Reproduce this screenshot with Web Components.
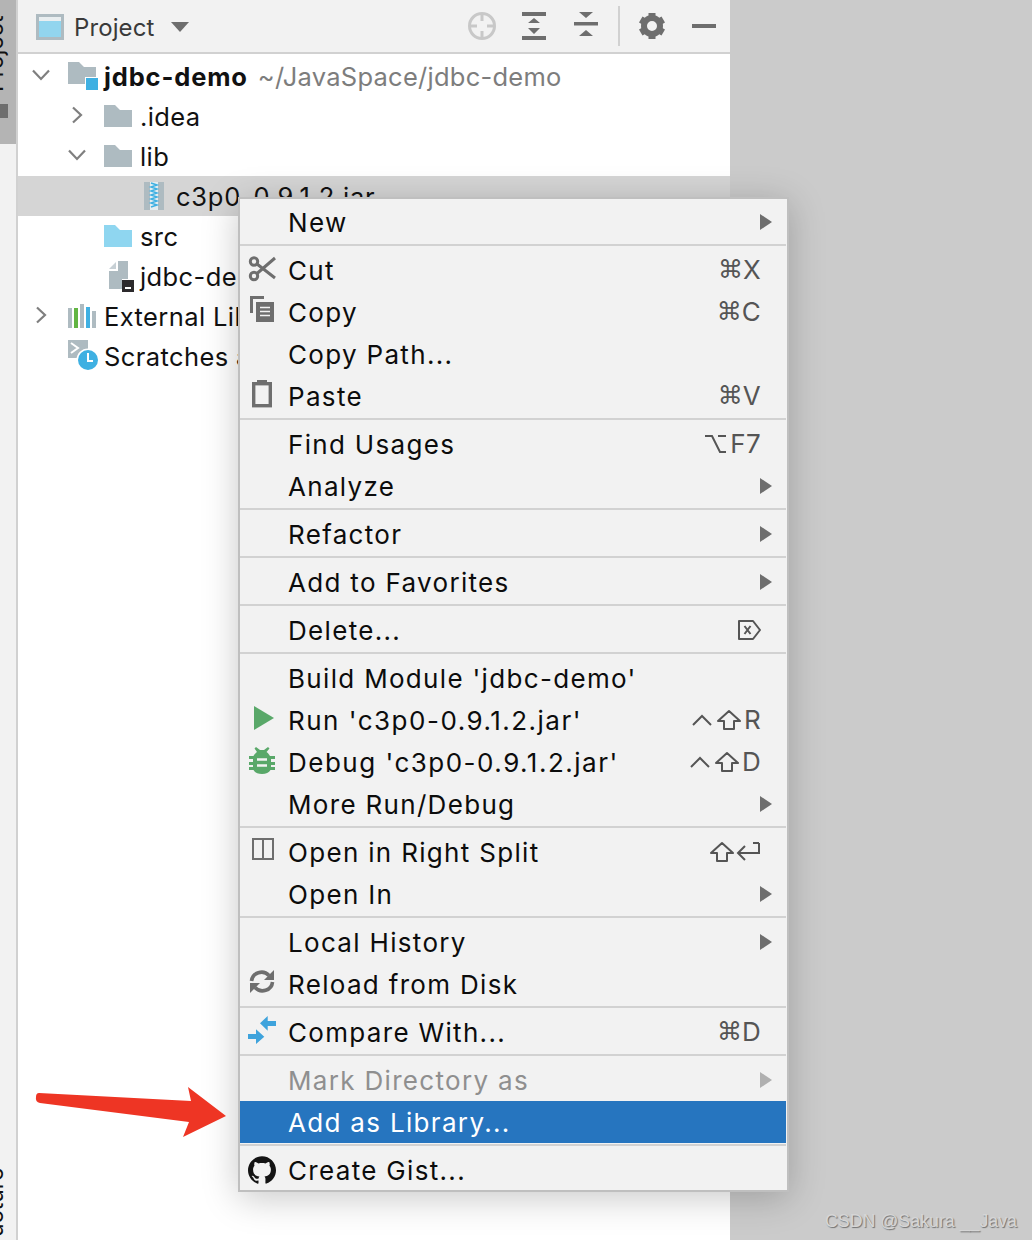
<!DOCTYPE html>
<html lang="en"><head><meta charset="utf-8"><title>Project context menu</title>
<style>
html,body{margin:0;padding:0;background:#cbcbcb}
body{font-family:Inter,"Liberation Sans",sans-serif;width:1032px;height:1240px;overflow:hidden}
</style></head><body>
<ij-app>
  <ij-strip slot="strip"></ij-strip>
  <ij-panel slot="panel">
    <ij-toolbar></ij-toolbar>
    <ij-row depth="0" chev="down" icon="module"><b style="letter-spacing:.85px">jdbc-demo</b><span style="color:#7d7d7d;margin-left:10px;letter-spacing:.25px">~/JavaSpace/jdbc-demo</span></ij-row>
    <ij-row depth="1" chev="right" icon="folder">.idea</ij-row>
    <ij-row depth="1" chev="down" icon="folder">lib</ij-row>
    <ij-row depth="2" icon="jar" selected><span style="letter-spacing:.75px">c3p0-0.9.1.2.jar</span></ij-row>
    <ij-row depth="1" icon="srcfolder">src</ij-row>
    <ij-row depth="1" icon="iml">jdbc-demo.iml</ij-row>
    <ij-row depth="0" chev="right" icon="libs">External Libraries</ij-row>
    <ij-row depth="0" icon="scratch">Scratches and Consoles</ij-row>
  </ij-panel>
  <ij-menu slot="overlay">
    <ij-item arrow>New</ij-item>
    <ij-sep></ij-sep>
    <ij-item icon="cut" keys="cmd X">Cut</ij-item>
    <ij-item icon="copy" keys="cmd C">Copy</ij-item>
    <ij-item>Copy Path...</ij-item>
    <ij-item icon="paste" keys="cmd V">Paste</ij-item>
    <ij-sep></ij-sep>
    <ij-item keys="opt F7">Find Usages</ij-item>
    <ij-item arrow>Analyze</ij-item>
    <ij-sep></ij-sep>
    <ij-item arrow>Refactor</ij-item>
    <ij-sep></ij-sep>
    <ij-item arrow>Add to Favorites</ij-item>
    <ij-sep></ij-sep>
    <ij-item keys="del">Delete...</ij-item>
    <ij-sep></ij-sep>
    <ij-item>Build Module 'jdbc-demo'</ij-item>
    <ij-item icon="run" keys="ctrl shift R"><span style="letter-spacing:1.5px">Run 'c3p0-0.9.1.2.jar'</span></ij-item>
    <ij-item icon="debug" keys="ctrl shift D"><span style="letter-spacing:1.5px">Debug 'c3p0-0.9.1.2.jar'</span></ij-item>
    <ij-item arrow>More Run/Debug</ij-item>
    <ij-sep></ij-sep>
    <ij-item icon="split" keys="shift ret">Open in Right Split</ij-item>
    <ij-item arrow>Open In</ij-item>
    <ij-sep></ij-sep>
    <ij-item arrow>Local History</ij-item>
    <ij-item icon="reload">Reload from Disk</ij-item>
    <ij-sep></ij-sep>
    <ij-item icon="compare" keys="cmd D">Compare With...</ij-item>
    <ij-sep></ij-sep>
    <ij-item arrow disabled>Mark Directory as</ij-item>
    <ij-item active>Add as Library...</ij-item>
    <ij-sep></ij-sep>
    <ij-item icon="github">Create Gist...</ij-item>
  </ij-menu>
  <ij-arrow slot="overlay"></ij-arrow>
  <ij-mark slot="overlay">CSDN @Sakura __Java</ij-mark>
</ij-app>
<script>
const G='#6e6e6e', F='#aebbc1', B='#3fb0e2', GR='#59a869', K='#555';
const FOLDER='M0 0H11L16 5H28V22H0Z';
const ICONS={
 panel:[28,26,`<rect x="1.5" y="1.5" width="25" height="23" fill="#92d5ee" stroke="${F}" stroke-width="3"/><rect x="3" y="3" width="22" height="4" fill="#e9eef0"/>`],
 module:[32,28,`<path d="${FOLDER}" fill="${F}"/><rect x="17" y="15" width="14" height="14" fill="#fff"/><rect x="18" y="16" width="12" height="12" fill="${B}"/>`],
 folder:[28,22,`<path d="${FOLDER}" fill="${F}"/>`],
 srcfolder:[28,22,`<path d="${FOLDER}" fill="#8fd6f0"/>`],
 jar:[24,28,`<g transform="translate(4 0)"><rect width="20" height="28" fill="${F}"/><rect x="6" width="8" height="28" fill="#e4edf0"/><path d="M7 1l6 2-6 2 6 2-6 2 6 2-6 2 6 2-6 2 6 2-6 2 6 2-6 2" fill="none" stroke="#3fb0e2" stroke-width="1.500"/></g>`],
 iml:[30,30,`<g transform="translate(4 0)"><path d="M1 8L8 1V8Z" fill="#c7d0d5"/><path d="M10 0H20V20H14V28H1V10H10Z" fill="${F}"/><rect x="14" y="18" width="13" height="13" fill="#fff"/><rect x="14" y="19" width="12" height="12" fill="#2c2a2c"/><rect x="17" y="26" width="6" height="2" fill="#fff"/></g>`],
 libs:[28,24,`<rect y="4" width="4" height="20" fill="${F}"/><rect x="6" y="4" width="4" height="20" fill="#62b543"/><rect x="12" width="4" height="24" fill="${F}"/><rect x="18" y="3" width="4" height="21" fill="${B}"/><rect x="24" y="7" width="4" height="17" fill="${F}"/>`],
 scratch:[30,32,`<rect width="20" height="18" fill="${F}"/><path d="M3 3l7 5-7 5" fill="none" stroke="#fff" stroke-width="2"/><circle cx="20" cy="20" r="11.5" fill="#fff"/><circle cx="20" cy="20" r="10" fill="${B}"/><path d="M20 13v8h5" fill="none" stroke="#fff" stroke-width="2"/>`],
 cut:[28,28,`<g fill="none" stroke="${G}" stroke-width="3"><circle cx="6" cy="5.500" r="3.700"/><circle cx="6" cy="20" r="3.700"/><path d="M9 8L27 22M9 17.500L27 2"/></g>`],
 copy:[28,28,`<path d="M2-2H16V1H5V15H2Z" fill="${G}"/><rect x="8" y="4" width="18" height="20" fill="${G}"/><path d="M12 9.500H22M12 13.500H22M12 17.500H22" stroke="#f2f2f2" stroke-width="1.600"/>`],
 paste:[28,28,`<rect x="5.700" y="1.700" width="16.600" height="22" fill="none" stroke="${G}" stroke-width="3.400"/><rect x="9" y="-2" width="10" height="5" fill="${G}"/>`],
 run:[28,28,`<path d="M6 0L26 12L6 24Z" fill="${GR}"/>`],
 debug:[28,28,`<path d="M8-1l4 3h4l4-3 1.500 1.500-3 3.500c2 1.500 3 3 3.500 4H27v3h-4v3h4v3h-4v2h4v3h-4.500c-1.500 2.500-4.500 4-8.500 4s-7-1.500-8.500-4H1v-3h4v-2H1v-3h4v-3H1V8h4.500C6 7 7 5.500 9 4L6.500.5Z" fill="${GR}"/><path d="M9 11.500H19M9 17.500H19" stroke="#f2f2f2" stroke-width="2.500"/>`],
 split:[28,28,`<rect x="5" y="1" width="20" height="20" fill="none" stroke="${G}" stroke-width="2"/><path d="M15 1V21" stroke="${G}" stroke-width="2"/>`],
 reload:[28,28,`<g fill="none" stroke="${G}" stroke-width="3.600"><path d="M3.500 11A10 9.500 0 0 1 21 5.500"/><path d="M24.500 12A10 9.500 0 0 1 7 17.500"/></g><path d="M26 0V10H16Z" fill="${G}"/><path d="M2 23V13H12Z" fill="${G}"/>`],
 compare:[28,28,`<path transform="translate(0 -2)" d="M12 7.300L19.700 0V5H28V10H19.700V14.700Z M16.300 20.700L8 13.300V18H0V23H8V28Z" fill="#3ea3dc"/>`],
 github:[28,28,`<path transform="scale(1.167)" fill="#141414" d="M12 .297c-6.630 0-12 5.373-12 12 0 5.303 3.438 9.800 8.205 11.385.600.113.820-.258.820-.577 0-.285-.010-1.040-.015-2.040-3.338.724-4.042-1.610-4.042-1.610C4.422 18.070 3.633 17.700 3.633 17.700c-1.087-.744.084-.729.084-.729 1.205.084 1.838 1.236 1.838 1.236 1.070 1.835 2.809 1.305 3.495.998.108-.776.417-1.305.760-1.605-2.665-.300-5.466-1.332-5.466-5.930 0-1.310.465-2.380 1.235-3.220-.135-.303-.540-1.523.105-3.176 0 0 1.005-.322 3.300 1.230.960-.267 1.980-.399 3-.405 1.020.006 2.040.138 3 .405 2.280-1.552 3.285-1.230 3.285-1.230.645 1.653.240 2.873.120 3.176.765.840 1.230 1.910 1.230 3.220 0 4.610-2.805 5.625-5.475 5.920.420.360.810 1.096.810 2.220 0 1.606-.015 2.896-.030 3.286 0 .315.210.690.825.570C20.565 22.092 24 17.592 24 12.297c0-6.627-5.373-12-12-12"/>`],
 del:[24,20,`<g fill="none" stroke="${K}" stroke-width="2" stroke-linejoin="round"><path d="M2 1H16L23 10L16 19H2Z"/><path d="M7.500 6L13.500 14M13.500 6L7.500 14"/></g>`],
 ret:[24,20,`<path d="M22 1H16M22 1V11H2M8 4L1 11L8 18" fill="none" stroke="${K}" stroke-width="2"/>`],
 ctrl:[20,12,`<path d="M1 11L10 2L19 11" fill="none" stroke="${K}" stroke-width="2"/>`],
 shift:[24,20,`<path d="M12 1L23 11H17V19H7V11H1Z" fill="none" stroke="${K}" stroke-width="2" stroke-linejoin="round"/>`],
 opt:[23,20,`<path d="M1 2H8L16 18H22M14 2H22" fill="none" stroke="${K}" stroke-width="2"/>`],
 target:[28,28,`<g fill="none" stroke="#c8c8c8" stroke-width="3"><circle cx="14" cy="14" r="12.500"/><path d="M14 2V9M14 19V26M2 14H9M19 14H26"/></g>`],
 expand:[28,28,`<g fill="${G}"><rect x="2" y="0" width="24" height="4"/><rect x="2" y="24" width="24" height="4"/><path d="M14 6L20 11H8ZM14 22L8 16H20Z"/></g>`],
 collapse:[28,28,`<g fill="${G}"><rect x="2" y="10" width="24" height="3.500"/><path d="M7 0H21L14 6ZM14 18L21 24H7Z"/></g>`],
 gear:[28,28,`<g fill="${G}"><circle cx="14" cy="14" r="8" fill="none" stroke="${G}" stroke-width="6"/>${[0,60,120,180,240,300].map(a=>`<rect x="10.500" y="1" width="7" height="6" transform="rotate(${a} 14 14)"/>`).join('')}</g>`],
 minimize:[28,28,`<rect x="2" y="12" width="24" height="4" fill="${G}"/>`]
};
function svg(n,style=''){const [w,h,b]=ICONS[n];return `<svg xmlns="http://www.w3.org/2000/svg" width="${w}" height="${h}" viewBox="0 0 ${w} ${h}" style="display:block;overflow:visible;${style}">${b}</svg>`}
function key(t){
 if(t==='cmd')return '<span class="g">⌘</span>';
 if(t==='ctrl')return svg(t,'margin:0 2px 0 0');
 if(ICONS[t])return svg(t);
 return `<span>${t}</span>`;
}
class Base extends HTMLElement{
 connectedCallback(){ if(!this.shadowRoot){this.attachShadow({mode:'open'}).innerHTML=this.render()} }
}
customElements.define('ij-app',class extends Base{render(){return `<style>
:host{display:grid;grid-template-columns:18px 712px 1fr;height:1240px;position:relative;overflow:hidden;background:#cbcbcb;font-family:Inter,"Liberation Sans",sans-serif;color:#000}
</style><slot name="strip"></slot><slot name="panel"></slot><div></div><slot name="overlay"></slot>`}});
customElements.define('ij-strip',class extends Base{render(){return `<style>
:host{display:flex;flex-direction:column;justify-content:space-between;height:1240px;width:16px;background:#f2f2f2;border-right:2px solid #d1d1d1;overflow:hidden}
.tab{height:144px;background:#b4b4b4;overflow:hidden}
.t{writing-mode:vertical-rl;transform:rotate(180deg);font-size:23px;line-height:30px;width:30px;white-space:nowrap;margin-left:-20px;color:#111;text-align:left}
.tab .t{height:92px}
.sq{width:8px;height:14px;background:#6e6e6e;margin-top:12px}
.bot{height:75px;overflow:hidden}
.bot .t{height:103px}
</style><div class="tab"><div class="t">Project</div><div class="sq"></div></div><div class="bot"><div class="t">Structure</div></div>`}});
customElements.define('ij-panel',class extends Base{render(){return `<style>
:host{display:block;background:#fff;height:1240px;overflow:hidden}
</style><slot></slot>`}});
customElements.define('ij-toolbar',class extends Base{render(){return `<style>
:host{display:flex;align-items:center;height:52px;margin-bottom:2px;border-bottom:2px solid #d1d1d1;background:#f2f2f2;padding:0 12px 0 18px;font-size:24px;color:#3a3a3a;letter-spacing:.1px}
.p{margin-top:2px}
.n{margin:2px 0 0 10px;width:80px;white-space:nowrap}
.drop{width:0;height:0;border:9px solid transparent;border-top:10px solid #6e6e6e;border-bottom:0;margin:2px 0 0 17px}
.sp{flex:1}
.i{margin-left:24px}
.d{width:2px;height:40px;background:#d1d1d1;margin:0 18px}
.d+.i{margin-left:0}
</style><span class="p">${svg('panel')}</span><span class="n">Project</span><span class="drop"></span><span class="sp"></span>
<span class="i">${svg('target')}</span><span class="i">${svg('expand')}</span><span class="i">${svg('collapse')}</span><span class="d"></span><span class="i">${svg('gear')}</span><span class="i">${svg('minimize')}</span>`}});
customElements.define('ij-row',class extends Base{render(){
 const d=+this.getAttribute('depth'), c=this.getAttribute('chev'), i=this.getAttribute('icon');
 const ch=c==='down'?'M1 3.500L9 12L17 3.500':c==='right'?'M5 .5L13 8L5 15.500':'';
 return `<style>
:host{display:flex;align-items:center;height:40px;white-space:nowrap;font-size:25.5px;letter-spacing:.4px;padding-left:${5+36*d}px;color:#111}
:host([selected]){background:#d5d5d5}
.c{width:36px;flex:none;display:flex;justify-content:center}
.ic{width:36px;margin-left:9px;flex:none}
</style><span class="c">${ch?`<svg width="18" height="18" viewBox="0 0 18 18" style="display:block;overflow:visible"><path d="${ch}" fill="none" stroke="#7f7f7f" stroke-width="2.200"/></svg>`:''}</span><span class="ic">${svg(i)}</span><span class="l"><slot></slot></span>`}});
customElements.define('ij-menu',class extends Base{render(){return `<style>
:host{position:absolute;left:238px;top:197px;width:551px;height:995px;box-sizing:border-box;border:2px solid #bfbfbf;background:#f2f2f2;padding:2px 1px 0 0;box-shadow:0 6px 34px rgba(0,0,0,.22);overflow:hidden;font-size:26px;letter-spacing:1.32px}
</style><slot></slot>`}});
customElements.define('ij-sep',class extends Base{render(){return `<style>
:host{display:block;height:6px;box-sizing:border-box;padding-top:1px}
div{height:2px;background:#d2d2d2}
</style><div></div>`}});
customElements.define('ij-item',class extends Base{render(){
 const i=this.getAttribute('icon'),k=this.getAttribute('keys'),a=this.hasAttribute('arrow');
 return `<style>
:host{display:flex;align-items:center;height:42px;padding-left:8px;color:#0c0c0c;white-space:nowrap}
:host([disabled]){color:#8f8f8f}
:host([active]){background:#2675bf;color:#fff}
.i{width:28px;height:28px;flex:none}
.l{flex:1;margin:0 0 0 12px}
.k{display:flex;align-items:center;gap:3px;margin:-1px 25px 0 0;color:#555;letter-spacing:.3px;font-size:26px}
.g{font-family:"DejaVu Sans",sans-serif;font-size:25px;letter-spacing:0;margin-right:-3px}
.a{width:0;height:0;border:8px solid transparent;border-left:12px solid #6e6e6e;border-right:0;margin-right:14px}
:host([disabled]) .a{border-left-color:#b0b0b0}
</style><span class="i">${i?svg(i):''}</span><span class="l"><slot></slot></span>${k?`<span class="k">${k.split(' ').map(key).join('')}</span>`:''}${a?'<span class="a"></span>':''}`}});
customElements.define('ij-arrow',class extends Base{render(){return `<style>
:host{position:absolute;left:0;top:0;width:240px;height:1150px;pointer-events:none}
svg{display:block}
</style><svg width="240" height="1150" viewBox="0 0 240 1150"><path d="M39 1093L191 1101L188 1087L226 1116L183 1137L189 1122L40 1103Q35 1102 36 1097Q36 1093 39 1093Z" fill="#ee3524"/></svg>`}});
customElements.define('ij-mark',class extends Base{render(){return `<style>
:host{position:absolute;right:15px;top:1211px;font:17.8px/20px "Liberation Sans",sans-serif;color:#d6d6d6;text-shadow:1px 1px 1px rgba(0,0,0,.45);white-space:nowrap}
</style><slot></slot>`}});
</script></body></html>
